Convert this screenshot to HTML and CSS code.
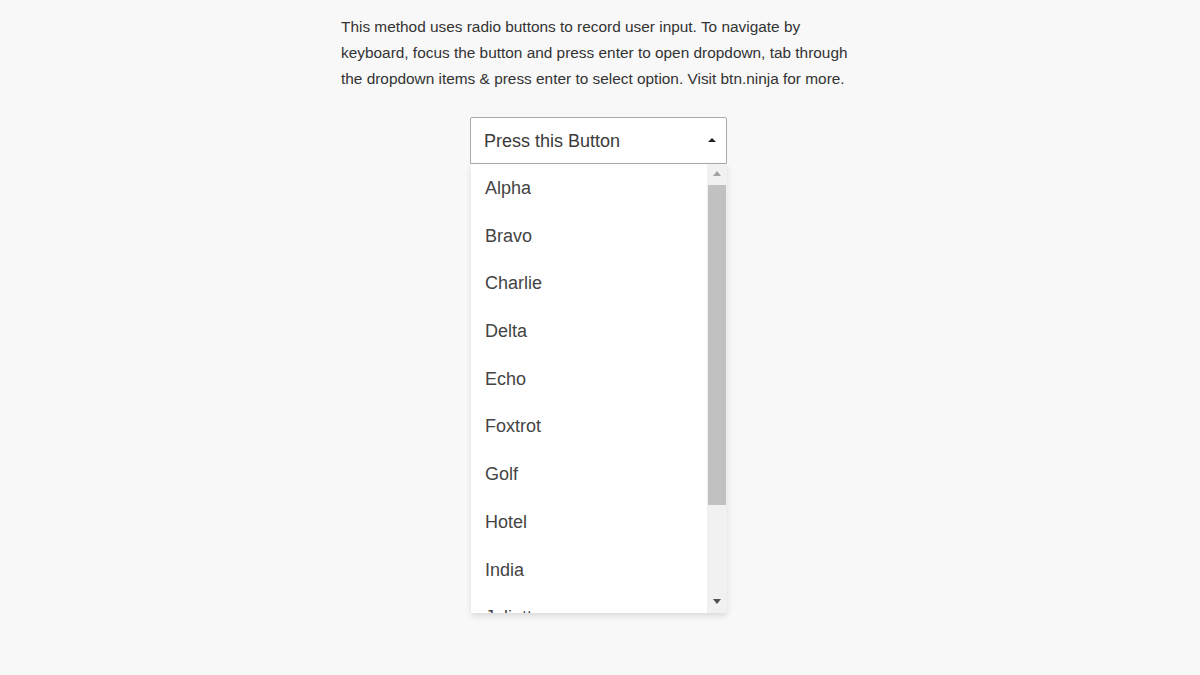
FILE: index.html
```html
<!DOCTYPE html>
<html lang="en">
<head>
<meta charset="utf-8">
<title>Dropdown</title>
<link rel="stylesheet" href="styles.css">
</head>
<body>
<main class="page">
  <p class="intro">This method uses radio buttons to record user input. To navigate by keyboard, focus the button and press enter to open dropdown, tab through the dropdown items &amp; press enter to select option. Visit btn.ninja for more.</p>
  <div class="dropdown">
    <button class="toggle" type="button">
      <span>Press this Button</span>
      <span class="caret"></span>
    </button>
    <div class="menu">
      <ul class="items">
        <li>Alpha</li>
        <li>Bravo</li>
        <li>Charlie</li>
        <li>Delta</li>
        <li>Echo</li>
        <li>Foxtrot</li>
        <li>Golf</li>
        <li>Hotel</li>
        <li>India</li>
        <li>Juliette</li>
      </ul>
      <div class="scrollbar">
        <div class="arrow up"></div>
        <div class="track"><div class="thumb"></div></div>
        <div class="arrow down"></div>
      </div>
    </div>
  </div>
</main>
</body>
</html>
```
FILE: styles.css
```css
html, body {
  margin: 0;
  padding: 0;
  background: #f8f8f8;
  height: 100%;
  overflow: hidden;
}
.page {
  font-family: "Liberation Sans", Arial, sans-serif;
  color: #333;
  display: flex;
  flex-direction: column;
  align-items: center;
  padding-top: 14px;
}
.intro {
  width: 520px;
  margin: 0 0 25px 0;
  padding-left: 1px;
  font-size: 15.4px;
  line-height: 26px;
  box-sizing: border-box;
}
.dropdown {
  width: 257px;
  margin-left: -3px;
  display: flex;
  flex-direction: column;
}
.toggle {
  height: 47px;
  box-sizing: border-box;
  border: 1px solid #aaa;
  background: #fff;
  border-radius: 2px 2px 0 0;
  display: flex;
  align-items: center;
  justify-content: space-between;
  padding: 2px 10px 0 13px;
  font-family: "Liberation Sans", Arial, sans-serif;
  font-size: 18px;
  color: #3a3a3a;
  margin: 0;
}
.caret {
  width: 0;
  height: 0;
  border-left: 4px solid transparent;
  border-right: 4px solid transparent;
  border-bottom: 4px solid #222;
  margin-bottom: 4px;
}
.menu {
  display: flex;
  height: 449px;
  margin-left: 1px;
  background: #fff;
  box-shadow: 0 3px 6px rgba(0, 0, 0, 0.12);
  overflow: hidden;
}
.items {
  list-style: none;
  margin: 0;
  padding: 0;
  flex: 1;
  overflow: hidden;
}
.items li {
  height: 47.7px;
  line-height: 49px;
  padding-left: 14px;
  font-size: 18px;
  color: #444;
}
.scrollbar {
  width: 20px;
  background: #f1f1f1;
  display: flex;
  flex-direction: column;
  align-items: center;
}
.arrow {
  height: 20px;
  width: 100%;
  display: flex;
  align-items: center;
  justify-content: center;
}
.arrow::before {
  content: "";
  width: 0;
  height: 0;
  border-left: 4px solid transparent;
  border-right: 4px solid transparent;
}
.arrow.up::before {
  border-bottom: 5px solid #a3a3a3;
  margin-top: -2px;
}
.arrow.down::before {
  border-top: 5px solid #505050;
  margin-bottom: 3px;
}
.track {
  flex: 1;
  width: 100%;
  display: flex;
  justify-content: center;
}
.thumb {
  width: 18px;
  height: 320px;
  margin-top: 1px;
  background: #c1c1c1;
}
```
